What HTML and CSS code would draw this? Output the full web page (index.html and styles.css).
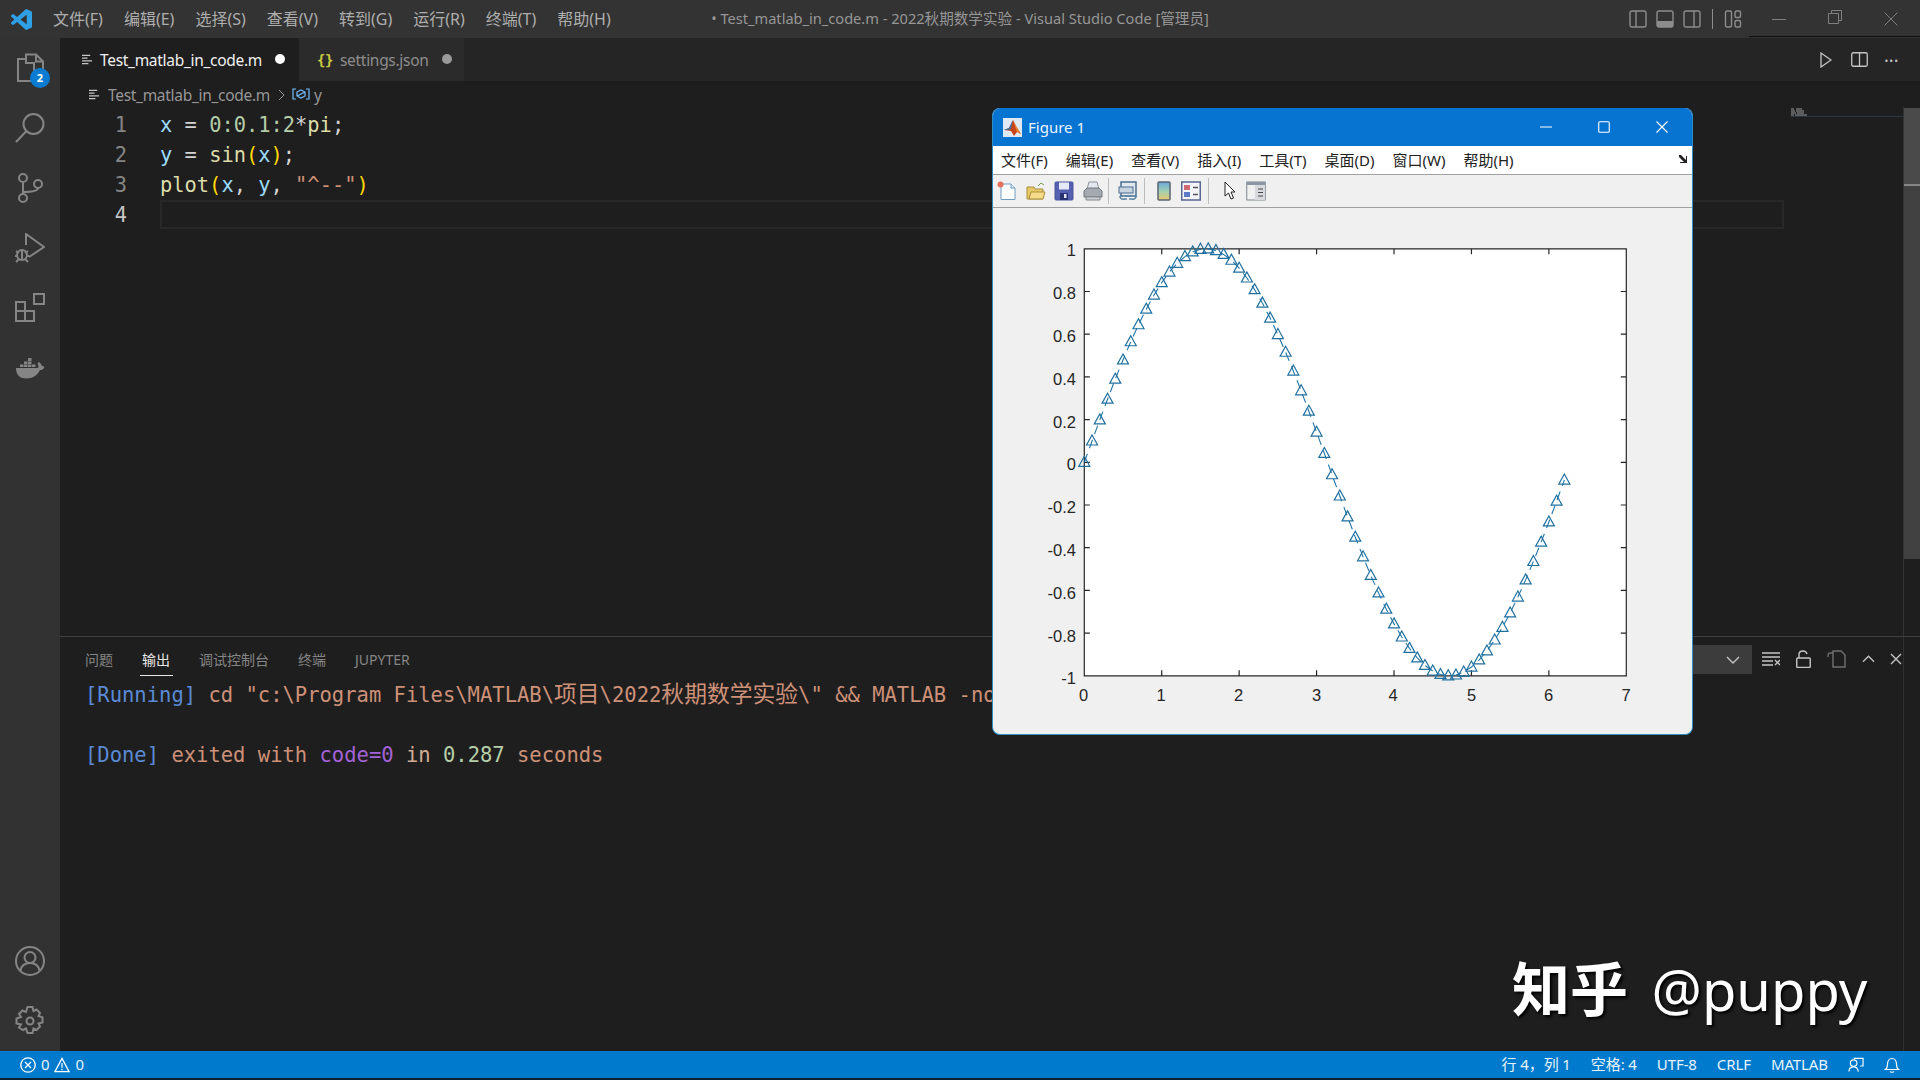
FILE: index.html
```html
<!DOCTYPE html>
<html lang="zh-CN">
<head>
    <meta charset="UTF-8">
    <title>Test_matlab_in_code.m - 2022秋期数学实验 - Visual Studio Code [管理员]</title>
    <link rel="stylesheet" href="styles.css">
</head>
<body>
    <header class="titlebar">
        <div class="titlebar-left">
            <svg class="logo" viewBox="0 0 24 24"><path d="M23.15 2.587L18.21.21a1.494 1.494 0 0 0-1.705.29l-9.46 8.63-4.12-3.128a.999.999 0 0 0-1.276.057L.327 7.261A1 1 0 0 0 .326 8.74L3.899 12 .326 15.26a1 1 0 0 0 .001 1.479L1.65 17.94a.999.999 0 0 0 1.276.057l4.12-3.128 9.46 8.63a1.492 1.492 0 0 0 1.704.29l4.942-2.377A1.5 1.5 0 0 0 24 20.06V3.939a1.5 1.5 0 0 0-.85-1.352zm-5.146 14.861L10.826 12l7.178-5.448v10.896z"/></svg>
            <nav class="menu">
                <span>文件(F)</span>
                <span>编辑(E)</span>
                <span>选择(S)</span>
                <span>查看(V)</span>
                <span>转到(G)</span>
                <span>运行(R)</span>
                <span>终端(T)</span>
                <span>帮助(H)</span>
            </nav>
        </div>
        <div class="window-title">• Test_matlab_in_code.m - 2022秋期数学实验 - Visual Studio Code [管理员]</div>
        <div class="titlebar-right">
            <svg class="layout-ico" viewBox="0 0 18 18"><rect x="1" y="1" width="16" height="16" rx="2"/><path d="M7 1v16"/></svg>
            <svg class="layout-ico" viewBox="0 0 18 18"><rect x="1" y="1" width="16" height="16" rx="2"/><path d="M1 11h16v4a2 2 0 0 1-2 2H3a2 2 0 0 1-2-2z" class="solid"/></svg>
            <svg class="layout-ico" viewBox="0 0 18 18"><rect x="1" y="1" width="16" height="16" rx="2"/><path d="M11 1v16"/></svg>
            <i class="layout-sep"></i>
            <svg class="layout-ico layout-last" viewBox="0 0 18 18"><rect x="1.500" y="1" width="6" height="16" rx="1.500"/><rect x="11" y="1" width="5.500" height="6.500" rx="1.500"/><rect x="11" y="10.500" width="5.500" height="6.500" rx="1.500"/></svg>
            <div class="window-btns">
                <svg class="win-ico" viewBox="0 0 14 14"><path d="M0 7.500h14"/></svg>
                <svg class="win-ico win-restore" viewBox="0 0 14 14"><path d="M.5 3.500h10v10H.5zM3.500 3.500v-3h10v10h-3"/></svg>
                <svg class="win-ico win-close" viewBox="0 0 14 14"><path d="M.5.5l13 13M13.500.5l-13 13"/></svg>
            </div>
        </div>
    </header>

    <div class="workbench">
        <aside class="activity">
            <div class="activity-top">
                <div class="activity-item">
                    <svg viewBox="0 0 30 30"><path d="M11 6V1.500h10l7 7V23h-9M11 6H3v22h16V10h-8zM21 1.500v7h7"/></svg>
                    <span class="badge">2</span>
                </div>
                <div class="activity-item">
                    <svg viewBox="0 0 30 30"><circle cx="18.500" cy="11" r="10"/><path d="M11.500 18L1 29"/></svg>
                </div>
                <div class="activity-item">
                    <svg viewBox="0 0 30 30"><circle cx="8" cy="5" r="4"/><circle cx="8" cy="25" r="4"/><circle cx="23" cy="11" r="4"/><path d="M8 9v12M8 19c8 0 15-1 15-4"/></svg>
                </div>
                <div class="activity-item">
                    <svg viewBox="0 0 30 30"><path d="M11 12V1l18 13-15 10"/><circle cx="7" cy="22" r="5"/><path d="M7 17v10M1 18l3 2M13 18l-3 2M0 23h2M12 23h2M1 29l3-3M13 29l-3-3"/></svg>
                </div>
                <div class="activity-item">
                    <svg viewBox="0 0 30 30"><path d="M1 9h9v9h9v10H1zM1 18h9v10"/><rect x="19" y="1" width="10" height="10"/></svg>
                </div>
                <div class="activity-item">
                    <svg viewBox="0 0 30 22" class="docker"><path d="M1 11h22c1-2 0-4-.5-5l1.500-1c1.500 1 2.500 3 3 4 1 0 2 .5 2.500 1-1 2.500-3 3-4.500 3C22.500 18 18 21.500 11 21.500 4 21.500 1 17 1 11z"/><path d="M5 7.500h3.500V10H5zM9 7.500h3.500V10H9zM13 7.500h3.500V10H13zM17 7.500h3.500V10H17zM9 4.500h3.500V7H9zM13 4.500h3.500V7H13zM13 1h3.500v3H13z"/></svg>
                </div>
            </div>
            <div class="activity-bottom">
                <div class="activity-item">
                    <svg viewBox="0 0 30 30"><circle cx="15" cy="15" r="14"/><circle cx="15" cy="11.500" r="5.500"/><path d="M5.500 24.500c1-5 4-7.500 9.500-7.500s8.500 2.500 9.500 7.500"/></svg>
                </div>
                <div class="activity-item">
                    <svg viewBox="0 0 30 30"><circle cx="15" cy="15" r="3.500"/><path d="M12.500 1h5l1 4 3-1.500 3.500 3.500-1.500 3 4 1.500v5l-4 1 1.500 3-3.500 3.500-3-1.500-1 4.500h-5l-1.500-4.500-3 1.500L4 21.500l2-3-4.500-1v-5l4.500-1.500-2-3L7.500 4.500 11 6z"/></svg>
                </div>
            </div>
        </aside>

        <main class="main">
            <div class="tabbar">
                <div class="tab tab-active">
                    <svg class="file-ico" viewBox="0 0 12 12"><path d="M0 1h9M0 4h6M0 7h11M0 10h7"/></svg>
                    <span class="tab-name">Test_matlab_in_code.m</span>
                    <i class="tab-dot"></i>
                </div>
                <div class="tab tab-other">
                    <span class="json-ico">{}</span>
                    <span class="tab-name">settings.json</span>
                    <i class="tab-dot"></i>
                </div>
                <div class="editor-actions">
                    <svg class="play-ico" viewBox="0 0 12 16"><path d="M1 1l10 7-10 7z"/></svg>
                    <svg class="split-ico" viewBox="0 0 17 15"><rect x=".75" y=".75" width="15.500" height="13.500" rx="1.500"/><path d="M8.500 1v13"/></svg>
                    <span class="more">···</span>
                </div>
            </div>
            <div class="breadcrumb">
                <svg class="file-ico" viewBox="0 0 12 12"><path d="M0 1h9M0 4h6M0 7h11M0 10h7"/></svg>
                <span>Test_matlab_in_code.m</span>
                <svg class="crumb-sep" viewBox="0 0 7 12"><path d="M1 1l5 5-5 5"/></svg>
                <svg class="sym-ico" viewBox="0 0 18 12"><path d="M4 1H1v10h3M14 1h3v10h-3"/><path d="M9 2l4 2v4l-4 2-4-2V4zM5 8l8-4"/></svg>
                <span class="crumb-y">y</span>
            </div>
            <section class="editor">
                <div class="gutter">
                    <div>1</div>
                    <div>2</div>
                    <div>3</div>
                    <div class="gutter-current">4</div>
                </div>
                <div class="code">
                    <div class="line"><span class="var">x</span> = <span class="num">0:0.1:2</span>*<span class="fn">pi</span>;</div>
                    <div class="line"><span class="var">y</span> = <span class="fn">sin</span><span class="paren">(</span><span class="var">x</span><span class="paren">)</span>;</div>
                    <div class="line"><span class="fn">plot</span><span class="paren">(</span><span class="var">x</span>, <span class="var">y</span>, <span class="str">"^--"</span><span class="paren">)</span></div>
                    <div class="line line-current"></div>
                </div>
                <div class="minimap">
                    <svg class="minimap-text" viewBox="0 0 112 9"><path d="M0 1h3M5 1h6M0 3h4M5 3h8M0 5h5M6 5h7M0 7h3M4 7h12" class="mini-chars"/><path d="M0 8.500h112" class="mini-line"/></svg>
                </div>
                <div class="scrollbar">
                    <div class="scroll-track">
                        <div class="scroll-thumb"></div>
                    </div>
                </div>
            </section>
            <section class="panel">
                <div class="panel-head">
                    <div class="panel-tabs">
                        <span>问题</span>
                        <span class="panel-tab-active">输出</span>
                        <span>调试控制台</span>
                        <span>终端</span>
                        <span>JUPYTER</span>
                    </div>
                    <div class="panel-actions">
                        <div class="output-select">
                            <svg viewBox="0 0 14 8"><path d="M1 1l6 6 6-6"/></svg>
                        </div>
                        <svg class="clear-ico" viewBox="0 0 18 14"><path d="M0 1h18M0 5h18M0 9h11M0 13h11"/><path d="M13 8l5 5M18 8l-5 5"/></svg>
                        <svg class="lock-ico" viewBox="0 0 15 18"><rect x=".75" y="8" width="13.500" height="9.500" rx="1"/><path d="M3 8V4.500C3 2 5 1 7 1s3.500 1 4 3"/></svg>
                        <svg class="copy-ico" viewBox="0 0 19 18"><path d="M6 3V1h8l4 4v12H6V3M6 3H3C1 3 1 5 1 7"/></svg>
                        <svg class="up-ico" viewBox="0 0 14 8"><path d="M1 7l6-6 6 6"/></svg>
                        <svg class="x-ico" viewBox="0 0 12 12"><path d="M1 1l10 10M11 1L1 11"/></svg>
                    </div>
                </div>
                <div class="output">
                    <div class="out-line"><span class="tag">[Running]</span> <span class="str">cd "c:\Program Files\MATLAB\<span class="cjk">项目</span>\2022<span class="cjk">秋期数学实验</span>\" &amp;&amp; MATLAB -no</span></div>
                    <div class="out-line"></div>
                    <div class="out-line"><span class="tag">[Done]</span> <span class="str">exited with</span> <span class="kw">code=0</span> <span class="dim">in</span> <span class="num">0.287</span> <span class="str">seconds</span></div>
                </div>
            </section>
        </main>
    </div>

    <footer class="statusbar">
        <div class="status-left">
            <svg viewBox="0 0 16 16"><circle cx="8" cy="8" r="7.200"/><path d="M5 5l6 6M11 5l-6 6"/></svg>
            <span>0</span>
            <svg viewBox="0 0 17 16"><path d="M8.500 1L16 15H1zM8.500 6v5M8.500 12v1.500"/></svg>
            <span>0</span>
        </div>
        <div class="status-right">
            <span>行 4，列 1</span>
            <span>空格: 4</span>
            <span>UTF-8</span>
            <span>CRLF</span>
            <span>MATLAB</span>
            <svg viewBox="0 0 17 16"><circle cx="6" cy="6" r="3.500"/><path d="M1 15c0-3 2-5 5-5s4.500 2 5 5M6 1h10v8h-3"/></svg>
            <svg viewBox="0 0 15 16"><path d="M1 12.500c1.500-1 2-2 2-5 0-3.500 2-6 4.500-6s4.500 2.500 4.500 6c0 3 .5 4 2 5zM5.500 14.500c.5 1 3.500 1 4 0"/></svg>
        </div>
    </footer>
    <div class="status-edge"></div>

    <!-- MATLAB figure window floats over the editor -->
    <div class="figure">
        <div class="fig-title">
            <svg class="fig-logo" viewBox="0 0 19 19"><rect width="19" height="19" fill="#dfe9f3"/><path d="M1 12l5-2 4-8 3 6 5 8-4-2-3 4-3-5z" fill="#c8441c"/><path d="M1 12l5-2 4-8-2 9-3 1z" fill="#3f6fa0"/><path d="M10 2l3 6 5 8-4-2z" fill="#e9862b"/></svg>
            <span class="fig-name">Figure 1</span>
            <div class="fig-btns">
                <svg viewBox="0 0 12 12"><path d="M0 6h12"/></svg>
                <svg viewBox="0 0 12 12"><rect x=".75" y=".75" width="10.500" height="10.500" rx="1"/></svg>
                <svg viewBox="0 0 12 12"><path d="M.5.5l11 11M11.500.5l-11 11"/></svg>
            </div>
        </div>
        <div class="fig-menu">
            <span>文件(F)</span>
            <span>编辑(E)</span>
            <span>查看(V)</span>
            <span>插入(I)</span>
            <span>工具(T)</span>
            <span>桌面(D)</span>
            <span>窗口(W)</span>
            <span>帮助(H)</span>
            <svg class="fig-dock" viewBox="0 0 9 8"><path d="M1 0h2l5 5V1h1v7H2V7h4L1 2z" fill="#222"/></svg>
        </div>
        <div class="fig-tools">
            <svg viewBox="0 0 20 20"><path d="M4 3h10l4 4v11.500H4z" fill="#fff" stroke="#6f9ec4"/><path d="M14 3v4h4" fill="#d8e6f2" stroke="#6f9ec4"/><circle cx="3.500" cy="3.500" r="3" fill="#e8705a"/></svg>
            <svg viewBox="0 0 20 20"><path d="M1 6h7l1 2h8v10H1z" fill="#e8c868" stroke="#a98f3e"/><path d="M3 18l2-7h14l-2 7z" fill="#f4dc88" stroke="#a98f3e"/><path d="M12 5l3-3 3 2" fill="none" stroke="#7a9a4e"/></svg>
            <svg viewBox="0 0 20 20"><rect x="1" y="1" width="18" height="18" rx="1" fill="#5560b0" stroke="#4a5498"/><rect x="5" y="1.500" width="10" height="7" fill="#e6e9f6"/><rect x="6" y="12" width="8" height="7" fill="#27326e"/><rect x="10" y="13" width="2.500" height="4" fill="#dfe3f2"/></svg>
            <svg viewBox="0 0 20 20"><path d="M6 1h8l2 7H4z" fill="#e4e8ee" stroke="#8d959d"/><path d="M1 10l3-3h12l3 3v6H1z" fill="#a4aab0" stroke="#70777e"/><path d="M3 16h14v3H3z" fill="#cdd1d6" stroke="#80868c"/></svg>
            <i class="tool-sep sep-print"></i>
            <svg viewBox="0 0 20 20"><rect x="3" y="1" width="15" height="14" fill="#dfe7ef" stroke="#4e6f90" stroke-width="1.500"/><rect x="1" y="6" width="14" height="6" fill="#c8d4e0" stroke="#4e6f90"/><path d="M3 14c-2 2 0 5 3 4h3M17 14c2 2 0 5-3 4h-3M7 15h6" fill="none" stroke="#5c84a8" stroke-width="1.500"/></svg>
            <i class="tool-sep sep-insert"></i>
            <svg class="narrow" viewBox="0 0 14 20"><defs><linearGradient id="cbar" x1="0" y1="0" x2="0" y2="1"><stop offset="0" stop-color="#6aa6de"/><stop offset=".5" stop-color="#9fd0b0"/><stop offset="1" stop-color="#e8c870"/></linearGradient></defs><rect x="1" y="1" width="12" height="18" rx="1" fill="url(#cbar)" stroke="#5a6272" stroke-width="1.500"/></svg>
            <svg class="legend-ico" viewBox="0 0 20 20"><rect x=".75" y="1" width="18.500" height="18" fill="#f2f4f8" stroke="#5a6490" stroke-width="1.500"/><rect x="3" y="4" width="6" height="5" fill="#cf6a72"/><rect x="3" y="11" width="6" height="5" fill="#5c78c8"/><path d="M12 6.500h5M12 13.500h5" stroke="#555" stroke-width="1.500"/></svg>
            <i class="tool-sep sep-edit"></i>
            <svg class="narrow" viewBox="0 0 12 20"><path d="M1 1v14l3.500-3 2.500 6 2.500-1-2.500-6H11z" fill="#fff" stroke="#222"/></svg>
            <svg viewBox="0 0 20 20"><rect x=".75" y="1" width="18.500" height="18" fill="#f0f0f0" stroke="#7d858c"/><path d="M1 1h18v3H1z" fill="#8b98a4"/><rect x="9" y="4" width="10" height="15" fill="#d6dade"/><path d="M12 8h5M12 11.500h5M12 15h5" stroke="#444"/></svg>
        </div>
        <div class="fig-canvas">
            <svg class="plot" id="plot" viewBox="993 209 699 525">
                <rect class="plot-bg" x="1084.300" y="249.300" width="542" height="427"/>
                <g class="y-labels">
                    <text x="1076" y="256">1</text>
                    <text x="1076" y="299">0.8</text>
                    <text x="1076" y="342.500">0.6</text>
                    <text x="1076" y="385">0.4</text>
                    <text x="1076" y="428">0.2</text>
                    <text x="1076" y="470">0</text>
                    <text x="1076" y="513.500">-0.2</text>
                    <text x="1076" y="556">-0.4</text>
                    <text x="1076" y="599">-0.6</text>
                    <text x="1076" y="642">-0.8</text>
                    <text x="1076" y="684">-1</text>
                </g>
                <g class="x-labels">
                    <text x="1083.500" y="701">0</text>
                    <text x="1161" y="701">1</text>
                    <text x="1238.500" y="701">2</text>
                    <text x="1316.500" y="701">3</text>
                    <text x="1393" y="701">4</text>
                    <text x="1471.500" y="701">5</text>
                    <text x="1548.500" y="701">6</text>
                    <text x="1626" y="701">7</text>
                </g>
            </svg>
        </div>
    </div>

    <div class="watermark"><span class="wm-cn">知乎</span> @puppy</div>

    <script src="plot.js"></script>
</body>
</html>
```

FILE: styles.css
```css
* {
    box-sizing: border-box;
}
html, body {
    height: 100%;
}
body {
    margin: 0;
    width: 1920px;
    height: 1080px;
    overflow: hidden;
    position: relative;
    display: flex;
    flex-direction: column;
    background-color: #1e1e1e;
    color: #ccc;
    font-family: "Noto Sans", "Noto Sans CJK SC", sans-serif;
    font-size: 15px;
}
svg {
    display: block;
    flex: none;
}

/* title bar */
.titlebar {
    height: 38px;
    flex: none;
    display: grid;
    grid-template-columns: 1fr auto 1fr;
    align-items: center;
    background-color: #333;
    position: relative;
}
.titlebar::after {
    content: "";
    position: absolute;
    left: 1749px;
    right: 0;
    top: 36px;
    height: 1px;
    background-color: #0f0f0f;
}
.titlebar-left {
    display: flex;
    align-items: center;
    padding-left: 11px;
}
.logo {
    width: 21px;
    height: 21px;
    fill: #2f9fe6;
}
.menu {
    display: flex;
    gap: 21px;
    margin-left: 21px;
    margin-top: -2px;
    color: #aeaeae;
    font-size: 16px;
}
.window-title {
    margin-top: -3px;
    color: #979797;
    font-size: 14.600px;
}
.titlebar-right {
    display: flex;
    align-items: center;
    justify-content: flex-end;
}
.layout-ico {
    width: 18px;
    height: 18px;
    margin-right: 9px;
    fill: none;
    stroke: #8d8d8d;
    stroke-width: 1.400;
}
.layout-ico .solid {
    fill: #8d8d8d;
    stroke: none;
}
.layout-sep {
    width: 1px;
    height: 20px;
    background-color: #8d8d8d;
    margin: 0 11px 0 2px;
}
.layout-last {
    margin-right: 0;
}
.window-btns {
    display: flex;
    align-items: center;
    gap: 42px;
    margin-left: 30px;
    margin-right: 22px;
}
.win-ico {
    width: 14px;
    height: 14px;
    fill: none;
    stroke: #7f7f7f;
    stroke-width: 1;
}
.win-restore {
    margin-top: -4px;
}

/* layout */
.workbench {
    flex: 1;
    display: flex;
    min-height: 0;
}
.activity {
    width: 60px;
    flex: none;
    background-color: #323232;
    display: flex;
    flex-direction: column;
    justify-content: space-between;
}
.activity-item {
    height: 60px;
    display: flex;
    align-items: center;
    justify-content: center;
    position: relative;
}
.activity-item svg {
    width: 30px;
    height: 30px;
    fill: none;
    stroke: #858585;
    stroke-width: 2;
}
.activity-item svg.docker {
    height: 22px;
    stroke: none;
    fill: #858585;
}
.badge {
    position: absolute;
    left: 30px;
    top: 30px;
    width: 20px;
    height: 20px;
    border-radius: 50%;
    background-color: #0a7bd0;
    color: #fff;
    font-size: 11px;
    font-weight: 700;
    text-align: center;
    line-height: 20px;
}
.main {
    flex: 1;
    min-width: 0;
    display: flex;
    flex-direction: column;
}

/* tabs */
.tabbar {
    height: 43px;
    flex: none;
    display: flex;
    background-color: #252526;
}
.tab {
    display: flex;
    align-items: center;
    height: 100%;
    font-size: 15.500px;
    letter-spacing: -0.3px;
}
.tab-active {
    width: 239px;
    padding-left: 22px;
    background-color: #1e1e1e;
    color: #f0f0f0;
}
.tab-other {
    width: 165px;
    padding-left: 18px;
    background-color: #2b2b2b;
    color: #8d8d8d;
}
.file-ico {
    width: 11px;
    height: 12px;
    fill: none;
    stroke: #c5c5c5;
    stroke-width: 1.400;
}
.tab-active .tab-name {
    margin-left: 7px;
}
.tab-other .tab-name {
    margin-left: 9px;
}
.json-ico {
    color: #cbcb41;
    font-family: "DejaVu Sans Mono", monospace;
    font-size: 14px;
    font-weight: 700;
    letter-spacing: -0.5px;
    width: 14px;
}
.tab-dot {
    width: 10px;
    height: 10px;
    border-radius: 50%;
    margin-left: 13px;
    margin-top: -2px;
    background-color: #fff;
}
.tab-other .tab-dot {
    background-color: #9a9a9a;
}
.editor-actions {
    margin-left: auto;
    display: flex;
    align-items: center;
    padding-right: 20px;
}
.play-ico {
    width: 12px;
    height: 16px;
    fill: none;
    stroke: #c5c5c5;
    stroke-width: 1.300;
}
.split-ico {
    width: 17px;
    height: 15px;
    margin-left: 19px;
    fill: none;
    stroke: #c5c5c5;
    stroke-width: 1.300;
}
.more {
    margin-left: 16px;
    width: 16px;
    color: #c5c5c5;
    font-size: 18px;
    line-height: 1;
}

/* breadcrumb */
.breadcrumb {
    height: 26px;
    flex: none;
    display: flex;
    align-items: center;
    padding: 2px 0 0 29px;
    color: #979797;
    font-size: 15.500px;
    letter-spacing: -0.3px;
}
.breadcrumb span:first-of-type {
    margin-left: 8px;
}
.crumb-sep {
    width: 7px;
    height: 12px;
    margin-left: 8px;
    fill: none;
    stroke: #979797;
}
.sym-ico {
    width: 18px;
    height: 12px;
    margin-left: 7px;
    margin-top: -2px;
    fill: none;
    stroke: #75beff;
    stroke-width: 1.200;
}
.crumb-y {
    margin-left: 4px;
}

/* editor */
.editor {
    flex: 1;
    min-height: 0;
    display: flex;
    font-family: "DejaVu Sans Mono", "Noto Sans CJK SC", monospace;
    font-size: 20.400px;
    line-height: 30px;
    color: #d4d4d4;
}
.gutter {
    width: 67px;
    flex: none;
    padding-top: 3px;
    text-align: right;
    color: #858585;
}
.gutter-current {
    color: #c6c6c6;
}
.code {
    width: 1624px;
    flex: none;
    margin-left: 33px;
    padding-top: 3px;
}
.line {
    height: 30px;
    white-space: pre;
}
.line-current {
    height: 29px;
    border: 2px solid #282828;
}
.var {
    color: #9cdcfe;
}
.num {
    color: #b5cea8;
}
.fn {
    color: #dcdcaa;
}
.paren {
    color: #ffd700;
}
.str {
    color: #ce9178;
}
.minimap {
    width: 119px;
    flex: none;
    padding: 1px 0 0 7px;
}
.minimap-text {
    width: 112px;
    height: 9px;
    fill: none;
}
.mini-chars {
    stroke: #9a9a9a;
    stroke-width: 1;
}
.mini-line {
    stroke: #2c3546;
    stroke-width: 1;
}
.scrollbar {
    flex: 1;
    padding-top: 1px;
    border-left: 1px solid #333;
}
.scroll-track {
    height: 451px;
    background-color: #414141;
}
.scroll-thumb {
    height: 78px;
    background-color: #4a4a4a;
    border-bottom: 2px solid #858585;
}

/* panel */
.panel {
    height: 415px;
    flex: none;
    border-top: 1px solid #414141;
    display: flex;
    flex-direction: column;
    position: relative;
}
.panel::after {
    content: "";
    position: absolute;
    top: 0;
    bottom: 0;
    right: 16px;
    width: 1px;
    background-color: #303030;
}
.panel-head {
    height: 44px;
    flex: none;
    display: flex;
    justify-content: space-between;
}
.panel-tabs {
    display: flex;
    gap: 29px;
    padding: 13px 0 0 25px;
    color: #858585;
    font-size: 14px;
    line-height: 19px;
}
.panel-tabs span {
    height: 26px;
    position: relative;
}
.panel-tab-active {
    color: #e7e7e7;
}
.panel-tab-active::after {
    content: "";
    position: absolute;
    left: -2px;
    right: -3px;
    bottom: 0;
    height: 1px;
    background-color: #e7e7e7;
}
.panel-actions {
    display: flex;
    align-items: center;
    padding-right: 18px;
    fill: none;
    stroke: #c5c5c5;
    stroke-width: 1.400;
}
.output-select {
    width: 59px;
    height: 29px;
    margin-top: 1px;
    background-color: #3c3c3c;
    display: flex;
    align-items: center;
    justify-content: flex-end;
    padding-right: 12px;
}
.output-select svg {
    width: 14px;
    height: 8px;
}
.clear-ico {
    width: 18px;
    height: 14px;
    margin-left: 10px;
}
.lock-ico {
    width: 15px;
    height: 18px;
    margin-left: 16px;
}
.copy-ico {
    width: 19px;
    height: 18px;
    margin-left: 16px;
    stroke: #707070;
}
.up-ico {
    width: 13px;
    height: 8px;
    margin-left: 16px;
}
.x-ico {
    width: 12px;
    height: 12px;
    margin-left: 15px;
}
.output {
    margin-top: -1px;
    padding: 0 0 0 25px;
    font-family: "DejaVu Sans Mono", "Noto Sans CJK SC", monospace;
    font-size: 20.500px;
    line-height: 30px;
}
.out-line {
    height: 30px;
    white-space: pre;
}
.cjk {
    font-family: "Noto Sans CJK SC", sans-serif;
    font-size: 22.800px;
    line-height: 1;
}
.tag {
    color: #5a8ad6;
}
.kw {
    color: #a362d8;
}
.dim {
    color: #d3ad94;
}

/* status bar */
.statusbar {
    height: 27px;
    flex: none;
    display: flex;
    justify-content: space-between;
    align-items: center;
    background-color: #007acc;
    color: #e6f3fb;
    font-size: 15px;
    letter-spacing: -0.1px;
}
.statusbar span {
    margin-top: -2px;
}
.status-edge {
    height: 2px;
    flex: none;
    background-color: #0a2133;
}
.status-left {
    display: flex;
    align-items: center;
    padding-left: 20px;
}
.status-left svg {
    width: 16px;
    height: 16px;
    fill: none;
    stroke: #fff;
    stroke-width: 1.300;
}
.status-left span {
    margin-left: 5px;
    margin-right: 5px;
}
.status-left span:last-child {
    margin-right: 0;
}
.status-right {
    display: flex;
    align-items: center;
    gap: 20px;
    padding-right: 20px;
}
.status-right svg {
    width: 16px;
    height: 16px;
    fill: none;
    stroke: #fff;
    stroke-width: 1.200;
}

/* figure window */
.figure {
    position: absolute;
    left: 992px;
    top: 108px;
    width: 701px;
    height: 627px;
    display: flex;
    flex-direction: column;
    background-color: #f0f0f0;
    border: 1px solid #2f8fc5;
    border-top: none;
    border-radius: 8px;
    overflow: hidden;
    font-family: "Noto Sans", "Noto Sans CJK SC", sans-serif;
}
.fig-title {
    height: 38px;
    flex: none;
    display: flex;
    align-items: center;
    background-color: #0874d2;
    color: #eaf4fc;
    padding-left: 10px;
    padding-right: 24px;
}
.fig-logo {
    width: 19px;
    height: 19px;
}
.fig-name {
    margin-left: 6px;
    font-size: 15px;
}
.fig-btns {
    margin-left: auto;
    display: flex;
    align-items: center;
    gap: 46px;
    fill: none;
    stroke: #fff;
    stroke-width: 1.100;
}
.fig-btns svg {
    width: 12px;
    height: 12px;
}
.fig-menu {
    height: 29px;
    flex: none;
    display: flex;
    align-items: center;
    gap: 18px;
    padding: 0 5px 2px 8px;
    background-color: #fff;
    border-bottom: 1px solid #a0a0a0;
    color: #222;
    font-size: 15px;
}
.fig-dock {
    width: 9px;
    height: 8px;
    margin-left: auto;
}
.fig-tools {
    height: 33px;
    flex: none;
    display: flex;
    align-items: center;
    gap: 8.500px;
    padding-left: 4px;
    background-color: #f0f0f0;
    border-bottom: 1px solid #a0a0a0;
}
.fig-tools svg {
    width: 20px;
    height: 20px;
}
.fig-tools svg.narrow {
    width: 14px;
}
.tool-sep {
    width: 1px;
    height: 26px;
    background-color: #bdbdbd;
}
.sep-print {
    margin-left: -3px;
}
.sep-insert {
    margin-left: -2px;
    margin-right: 3.500px;
}
.legend-ico {
    margin-left: 1.500px;
}
.sep-edit {
    margin-left: -1.500px;
    margin-right: 5.500px;
}
.fig-canvas {
    flex: 1;
    min-height: 0;
}
.plot {
    width: 100%;
    height: 100%;
}
.plot-bg {
    fill: #fff;
}
.plot text {
    font-family: "Liberation Sans", Arial, sans-serif;
    font-size: 16.500px;
    fill: #262626;
}
.y-labels text {
    text-anchor: end;
}
.x-labels text {
    text-anchor: middle;
}
.axis-line {
    fill: none;
    stroke: #262626;
    stroke-width: 1.200;
}
.sine-line {
    fill: none;
    stroke: #2076a8;
    stroke-width: 1.100;
    stroke-dasharray: 9 6;
}
.marker {
    fill: none;
    stroke: #20709f;
    stroke-width: 1.200;
}

/* zhihu watermark */
.watermark {
    position: absolute;
    left: 1512px;
    top: 948px;
    color: #fff;
    font-family: "Noto Sans", "Noto Sans CJK SC", sans-serif;
    font-size: 56px;
    line-height: 82px;
    white-space: nowrap;
    text-shadow: 2px 2px 3px #000;
}
.wm-cn {
    font-weight: 700;
    font-size: 58px;
    margin-right: 9px;
}
```

FILE: plot.js
```js
// draws axes, ticks and the sine data into the figure svg
const plot = document.getElementById('plot');
const ns = 'http://www.w3.org/2000/svg';

const axLeft = 1084.3, axRight = 1626.3, axTop = 249.3, axBottom = 676.3;
const toX = x => axLeft + (axRight - axLeft) * x / 7;
const toY = y => axBottom - (axBottom - axTop) * (y + 1) / 2;

function add(name, cls, attrs) {
    const el = document.createElementNS(ns, name);
    el.setAttribute('class', cls);
    for (const key in attrs) {
        el.setAttribute(key, attrs[key]);
    }
    plot.appendChild(el);
}

// box and inward ticks on all four sides
let d = `M${axLeft} ${axTop}H${axRight}V${axBottom}H${axLeft}Z`;
for (let i = 1; i < 7; i++) {
    const x = toX(i);
    d += `M${x} ${axTop}v5.5M${x} ${axBottom}v-5.5`;
}
for (let i = 1; i < 10; i++) {
    const y = toY(-1 + i * 0.2);
    d += `M${axLeft} ${y}h5.5M${axRight} ${y}h-5.5`;
}
add('path', 'axis-line', { d: d });

// x = 0:0.1:2*pi
const points = [];
for (let i = 0; i * 0.1 <= 2 * Math.PI; i++) {
    points.push([toX(i * 0.1), toY(Math.sin(i * 0.1))]);
}
add('polyline', 'sine-line', { points: points.map(p => p.join(',')).join(' ') });

points.forEach(p => {
    add('path', 'marker', { d: `M${p[0]} ${p[1] - 6}l5.5 10h-11z` });
});
```
